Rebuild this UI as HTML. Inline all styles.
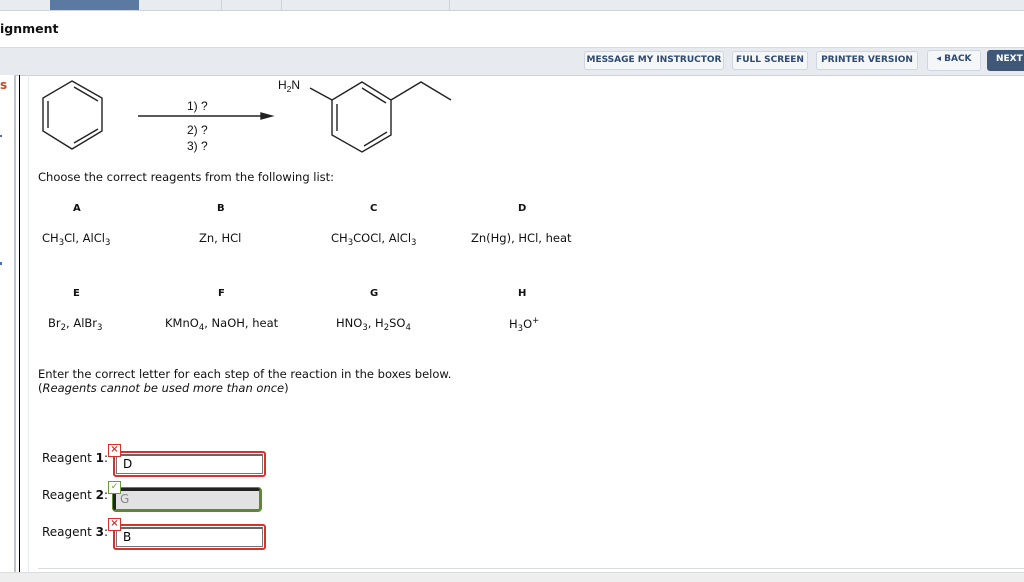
<!DOCTYPE html>
<html><head><meta charset="utf-8"><style>
body{margin:0;width:1024px;height:581px;overflow:hidden;background:#fff;font-family:"DejaVu Sans","Liberation Sans",sans-serif;font-size:11.5px;color:#111;position:relative}
.a{position:absolute;white-space:nowrap}
.btn{position:absolute;top:51px;height:17px;border:1px solid #cfd6df;border-radius:3px;background:#f4f6f8;color:#2f4a72;font-weight:bold;font-size:9px;line-height:17px;text-align:center;white-space:nowrap;overflow:hidden}
.lb{font-weight:bold;font-size:10px}
sub,sup{font-size:8.5px}
sub{vertical-align:-3px}
.inp{position:absolute;left:113px;width:150px;height:22px;box-sizing:border-box}
.bad{border:2px solid #d9322b;border-radius:3px;padding:1px}
.bad div{border:1px solid #777;border-top:2px solid #666;height:100%;box-sizing:border-box;background:#fff;padding-left:6px;font-size:12px;line-height:16px;color:#000}
.ic{position:absolute;left:108px;width:11px;height:11px;border:1px solid #d9322b;background:#fff;color:#d9322b;font-size:10px;line-height:10px;text-align:center;font-weight:bold}
</style></head><body>
<div class="a" style="left:0;top:0;width:1024px;height:10px;background:#e8ebef;border-bottom:1px solid #cdd3da"></div>
<div class="a" style="left:50px;top:0;width:89px;height:10px;background:#5a7aa1"></div>
<div class="a" style="left:221px;top:0;width:1px;height:10px;background:#cdd3da"></div>
<div class="a" style="left:281px;top:0;width:1px;height:10px;background:#cdd3da"></div>
<div class="a" style="left:449px;top:0;width:1px;height:10px;background:#cdd3da"></div>
<div class="a" style="left:0;top:21px;font-weight:bold;font-size:12.5px">ignment</div>
<div class="a" style="left:0;top:47px;width:1024px;height:27px;background:#e7eaee;border-top:1px solid #d7dce2;border-bottom:1px solid #cdd3da"></div>
<div class="btn" style="left:584px;width:138px">MESSAGE MY INSTRUCTOR</div>
<div class="btn" style="left:732px;width:74px">FULL SCREEN</div>
<div class="btn" style="left:816px;width:100px">PRINTER VERSION</div>
<div class="btn" style="left:927px;width:52px;height:19px;top:50px">◂ BACK</div>
<div class="btn" style="left:987px;width:50px;height:19px;top:50px;background:#3f5878;color:#fff;border-color:#3f5878;text-align:left;padding-left:8px">NEXT</div>
<div class="a" style="left:0;top:75px;width:15px;height:498px;background:#fff"></div>
<div class="a" style="left:0;top:78px;color:#d0451b;font-weight:bold;font-size:12px">s</div>
<div class="a" style="left:0;top:135px;width:2px;height:2px;background:#4a72b0"></div>
<div class="a" style="left:0;top:262px;width:2px;height:3px;background:#4a72b0"></div>
<div class="a" style="left:14px;top:75px;width:2px;height:498px;background:#bfc4ca"></div>
<div class="a" style="left:19px;top:75px;width:1px;height:498px;background:#000"></div>
<div class="a" style="left:28px;top:75px;width:1px;height:498px;background:#e6e9ed"></div>
<svg class="a" style="left:0;top:0" width="520" height="170" stroke="#222" stroke-width="1.4" fill="none">
<polygon points="72,81 102,98 102,131 72,149 43,131 43,98"/>
<line x1="74" y1="87" x2="98" y2="101"/><line x1="48" y1="101" x2="48" y2="128"/><line x1="74" y1="143" x2="98" y2="129"/>
<line x1="138" y1="116" x2="264" y2="116"/><polygon points="272,116 261,113 261,119" fill="#222"/>
<polygon points="362,82 391,100 391,135 362,152 332,135 332,100"/>
<line x1="337" y1="104" x2="337" y2="131"/><line x1="362" y1="88" x2="386" y2="103"/><line x1="364" y1="146" x2="387" y2="132"/>
<polyline points="391,100 421,82 451,100"/><line x1="332" y1="100" x2="310" y2="88"/>
</svg>
<div class="a" style="left:278px;top:78px;font-family:'Liberation Sans',sans-serif;font-size:12px">H<sub>2</sub>N</div>
<div class="a" style="left:187px;top:99px;font-family:'Liberation Sans',sans-serif;font-size:12px">1) ?</div>
<div class="a" style="left:187px;top:123px;font-family:'Liberation Sans',sans-serif;font-size:12px">2) ?</div>
<div class="a" style="left:187px;top:139px;font-family:'Liberation Sans',sans-serif;font-size:12px">3) ?</div>
<div class="a" style="left:38px;top:170px">Choose the correct reagents from the following list:</div>
<div class="a lb" style="left:73px;top:203px">A</div>
<div class="a lb" style="left:217px;top:203px">B</div>
<div class="a lb" style="left:370px;top:203px">C</div>
<div class="a lb" style="left:518px;top:203px">D</div>
<div class="a" style="left:42px;top:231px">CH<sub>3</sub>Cl, AlCl<sub>3</sub></div>
<div class="a" style="left:199px;top:231px">Zn, HCl</div>
<div class="a" style="left:331px;top:231px">CH<sub>3</sub>COCl, AlCl<sub>3</sub></div>
<div class="a" style="left:471px;top:231px">Zn(Hg), HCl, heat</div>
<div class="a lb" style="left:73px;top:288px">E</div>
<div class="a lb" style="left:218px;top:288px">F</div>
<div class="a lb" style="left:370px;top:288px">G</div>
<div class="a lb" style="left:518px;top:288px">H</div>
<div class="a" style="left:48px;top:316px">Br<sub>2</sub>, AlBr<sub>3</sub></div>
<div class="a" style="left:165px;top:316px">KMnO<sub>4</sub>, NaOH, heat</div>
<div class="a" style="left:336px;top:316px">HNO<sub>3</sub>, H<sub>2</sub>SO<sub>4</sub></div>
<div class="a" style="left:509px;top:316px">H<sub>3</sub>O<sup>+</sup></div>
<div class="a" style="left:38px;top:367px">Enter the correct letter for each step of the reaction in the boxes below.</div>
<div class="a" style="left:38px;top:381px">(<i>Reagents cannot be used more than once</i>)</div>
<div class="a" style="left:42px;top:451px;font-size:12px">Reagent <b>1</b>:</div>
<div class="a" style="left:42px;top:488px;font-size:12px">Reagent <b>2</b>:</div>
<div class="a" style="left:42px;top:525px;font-size:12px">Reagent <b>3</b>:</div>
<div class="inp bad" style="top:451px;width:153px;height:26px"><div>D</div></div>
<div class="ic" style="top:444px">×</div>
<div class="inp" style="top:488px;width:148px;height:23px;border:2px solid #5b8a2e;border-radius:3px;background:#e2e2e2;border-top:3px solid #222;border-left:3px solid #222;outline:1px solid #5b8a2e;color:#888;font-size:12px;line-height:17px;padding-left:4px">G</div>
<div class="ic" style="top:481px;border-color:#6a9a3a;color:#6a9a3a;font-size:9px">✓</div>
<div class="inp bad" style="top:524px;width:153px;height:26px"><div>B</div></div>
<div class="ic" style="top:518px">×</div>
<div class="a" style="left:38px;top:568px;width:986px;height:1px;background:#d7dce2"></div>
<div class="a" style="left:0;top:572px;width:1024px;height:9px;background:#eeeeee;border-top:1px solid #dcdcdc"></div>
</body></html>
